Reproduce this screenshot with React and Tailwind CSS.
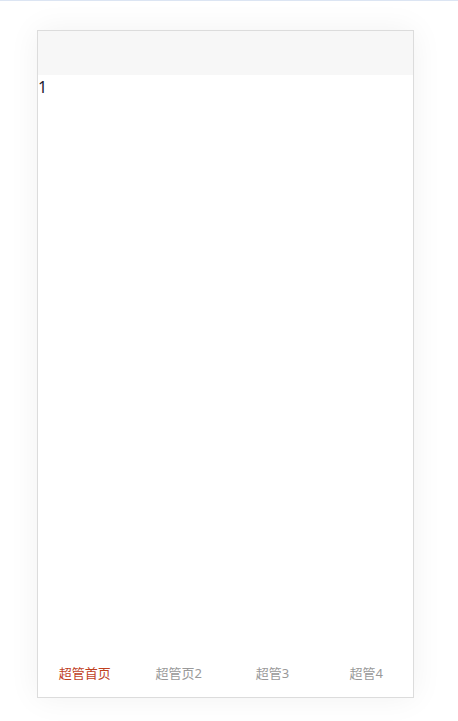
export default function App() {
  const tabs = ['超管首页', '超管页2', '超管3', '超管4'];
  return (
    <div className="min-h-[721px] bg-white" style={{ fontFamily: '"Noto Sans", "Noto Sans CJK SC", sans-serif' }}>
      <div className="h-px bg-[#dce5f3]" />
      <div className="ml-[37px] mt-[29px] flex h-[668px] w-[377px] flex-col border border-[#dcdcdc] bg-white shadow-[0_0_30px_rgba(0,0,0,0.06)]">
        <div className="h-[44px] bg-[#f7f7f7]" />
        <div className="flex-1 text-[16px] leading-6 text-[#1c2030]">1</div>
        <div className="flex h-[50px] items-center pt-[3px]">
          {tabs.map((t, i) => (
            <div
              key={t}
              className={`flex-1 text-center text-[13px] ${i === 0 ? 'text-[#c0411f]' : 'text-[#999999]'}`}
            >
              {t}
            </div>
          ))}
        </div>
      </div>
    </div>
  );
}
